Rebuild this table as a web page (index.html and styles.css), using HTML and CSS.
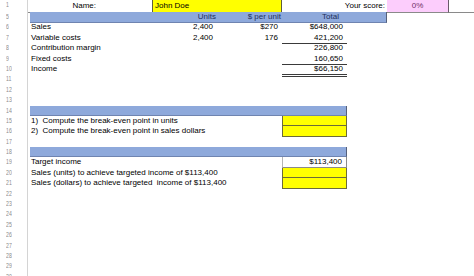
FILE: index.html
```html
<!DOCTYPE html>
<html lang="en">
<head>
<meta charset="utf-8">
<title>Break-even worksheet</title>
<link rel="stylesheet" href="styles.css">
</head>
<body>
<div class="sheet">
  <div class="row r1">
    <div class="rn"><span>1</span></div>
    <div class="cell colA"></div>
    <div class="cell colB name-label">Name:</div>
    <div class="cell colCD name-box">John Doe</div>
    <div class="cell colEF score-label">Your score:</div>
    <div class="cell colG score-box">0%</div>
    <div class="cell colH"></div>
  </div>

  <div class="row">
    <div class="rn"><span>5</span></div>
    <div class="cell colB blue"></div>
    <div class="cell colC blue hd">Units</div>
    <div class="cell colD blue hd">$ per unit</div>
    <div class="cell colE blue hd hd-total">Total</div>
    <div class="cell colF blue blue-end"></div>
  </div>
  <div class="row">
    <div class="rn"><span>6</span></div>
    <div class="cell colB label">Sales</div>
    <div class="cell colC num">2,400</div>
    <div class="cell colD num">$270</div>
    <div class="cell colE num">$648,000</div>
  </div>
  <div class="row">
    <div class="rn"><span>7</span></div>
    <div class="cell colB label">Variable costs</div>
    <div class="cell colC num">2,400</div>
    <div class="cell colD num">176</div>
    <div class="cell colE num ul">421,200</div>
  </div>
  <div class="row">
    <div class="rn"><span>8</span></div>
    <div class="cell colB label">Contribution margin</div>
    <div class="cell colE num">226,800</div>
  </div>
  <div class="row">
    <div class="rn"><span>9</span></div>
    <div class="cell colB label">Fixed costs</div>
    <div class="cell colE num ul">160,650</div>
  </div>
  <div class="row">
    <div class="rn"><span>10</span></div>
    <div class="cell colB label">Income</div>
    <div class="cell colE num dul">$66,150</div>
  </div>
  <div class="row"><div class="rn"><span>11</span></div></div>
  <div class="row"><div class="rn"><span>12</span></div></div>
  <div class="row"><div class="rn"><span>13</span></div></div>

  <div class="row">
    <div class="rn"><span>14</span></div>
    <div class="cell colB blue"></div>
    <div class="cell colC blue"></div>
    <div class="cell colD blue"></div>
    <div class="cell colE blue blue-end"></div>
  </div>
  <div class="row">
    <div class="rn"><span>15</span></div>
    <div class="cell colBD label">1)&nbsp; Compute the break-even point in units</div>
    <div class="cell colE input"></div>
  </div>
  <div class="row">
    <div class="rn"><span>16</span></div>
    <div class="cell colBD label">2)&nbsp; Compute the break-even point in sales dollars</div>
    <div class="cell colE input"></div>
  </div>
  <div class="row"><div class="rn"><span>17</span></div></div>

  <div class="row">
    <div class="rn"><span>18</span></div>
    <div class="cell colB blue"></div>
    <div class="cell colC blue"></div>
    <div class="cell colD blue"></div>
    <div class="cell colE blue blue-end"></div>
  </div>
  <div class="row">
    <div class="rn"><span>19</span></div>
    <div class="cell colBD label">Target income</div>
    <div class="cell colE num given">$113,400</div>
  </div>
  <div class="row">
    <div class="rn"><span>20</span></div>
    <div class="cell colBD label">Sales (units) to achieve targeted income of $113,400</div>
    <div class="cell colE input"></div>
  </div>
  <div class="row">
    <div class="rn"><span>21</span></div>
    <div class="cell colBD label">Sales (dollars) to achieve targeted&nbsp; income of $113,400</div>
    <div class="cell colE input"></div>
  </div>
  <div class="row"><div class="rn"><span>22</span></div></div>
  <div class="row"><div class="rn"><span>23</span></div></div>
  <div class="row"><div class="rn"><span>24</span></div></div>
  <div class="row"><div class="rn"><span>25</span></div></div>
  <div class="row"><div class="rn"><span>26</span></div></div>
  <div class="row"><div class="rn"><span>27</span></div></div>
  <div class="row"><div class="rn"><span>28</span></div></div>
  <div class="row"><div class="rn"><span>29</span></div></div>
  <div class="row"><div class="rn"><span>30</span></div></div>
</div>
</body>
</html>
```

FILE: styles.css
```css
* {
  box-sizing: border-box;
  margin: 0;
  padding: 0;
}

html,
body {
  background: #ffffff;
}

body {
  width: 474px;
  height: 276px;
  overflow: hidden;
  font-family: "Liberation Sans", Arial, sans-serif;
  font-size: 8px;
  color: #000000;
}

.sheet {
  display: flex;
  flex-direction: column;
}

.row {
  display: grid;
  grid-template-columns: 28px 2px 122px 65px 65px 65px 40px 62px 1fr;
  height: 10.4px;
  line-height: 10px;
  white-space: nowrap;
}

.rn {
  grid-column: 1;
  border-right: 1px solid #d4d4d4;
  text-align: left;
  padding-left: 6px;
  color: #8c8c8c;
}

.rn span {
  display: inline-block;
  font-size: 7px;
  transform: scaleX(0.74);
  transform-origin: left center;
}

.cell {
  overflow: visible;
}

.colA { grid-column: 2; }
.colB { grid-column: 3; }
.colC { grid-column: 4; }
.colD { grid-column: 5; }
.colE { grid-column: 6; }
.colF { grid-column: 7; }
.colG { grid-column: 8; }
.colH { grid-column: 9; }
.colCD { grid-column: 4 / 6; }
.colEF { grid-column: 6 / 8; }
.colBD { grid-column: 3 / 6; }

/* Row 1 : name and score */
.r1 {
  height: 12px;
}

.r1 .cell {
  border-bottom: 1px solid #8a8a8a;
  line-height: 12px;
}

.name-label {
  text-align: right;
  padding-right: 56px;
}

.name-box {
  background: #ffff00;
  border-left: 1px solid #5e5e3c;
  border-right: 1px solid #5e5e3c;
  padding-left: 2px;
}

.score-label {
  text-align: right;
  padding-right: 2px;
}

.score-box {
  background: #fccdfc;
  border-right: 1px solid #6a5a6a;
  text-align: center;
  color: #6e2f68;
}

/* Labels and numbers */
.label {
  padding-left: 1px;
}

.num {
  text-align: right;
  padding-right: 4px;
}

.ul {
  border-bottom: 1px solid #3a3a3a;
}

.dul {
  border-bottom: 3px double #3a3a3a;
}

/* Blue section bands */
.blue {
  background: #8ea9db;
  border-bottom: 1px solid #6f84b0;
}

.blue-end {
  border-right: 1px solid #55607a;
}

.hd {
  text-align: right;
  padding-right: 1px;
  color: #1c2f5c;
}

.hd-total {
  padding-right: 8px;
}

/* Answer cells */
.input {
  background: #ffff00;
  border-left: 1px solid #6b6b3a;
  border-right: 1px solid #6b6b3a;
  border-bottom: 1px solid #6b6b3a;
}

.given {
  border-left: 1px solid #b5b5b5;
  border-right: 1px solid #8a8a8a;
  border-bottom: 1px solid #8a8a8a;
}
```
